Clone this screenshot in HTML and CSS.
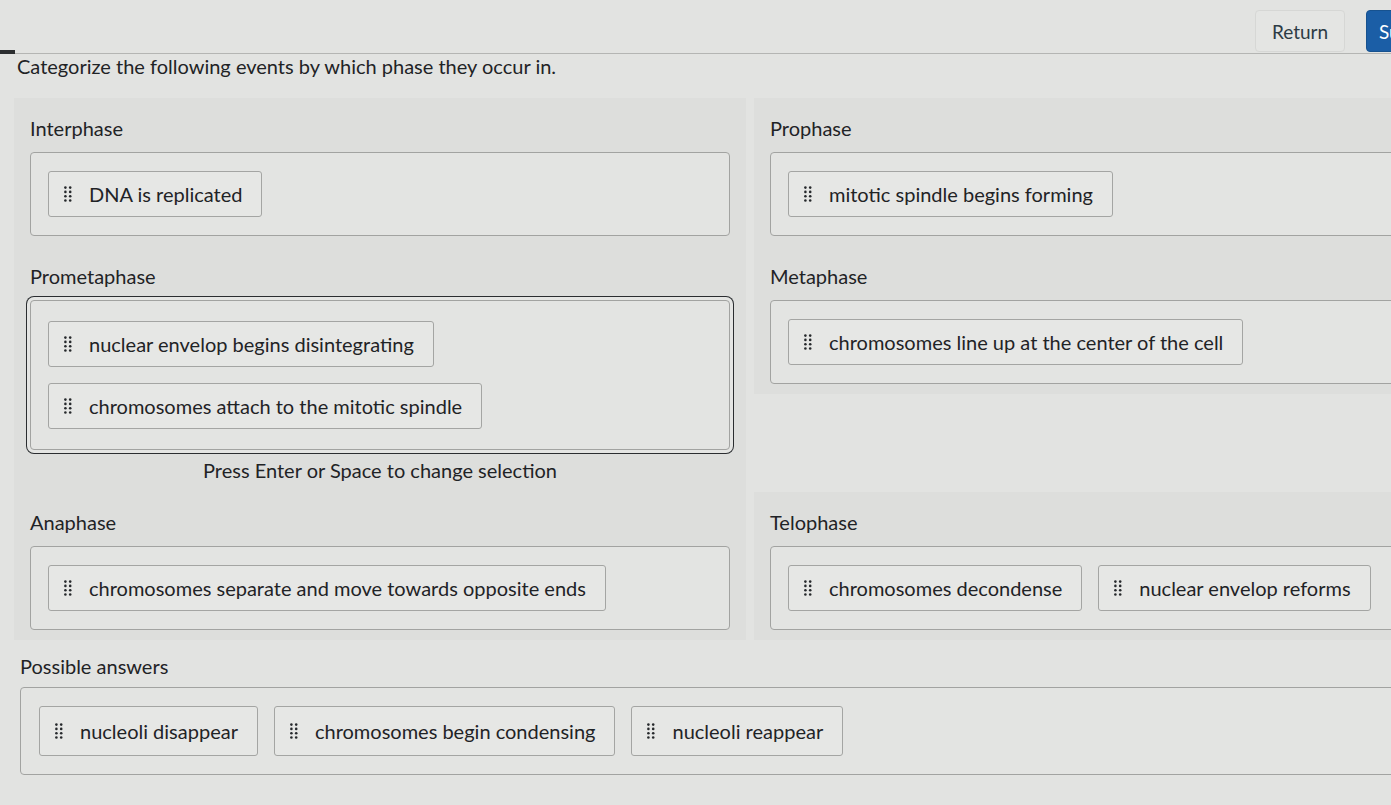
FILE: index.html
```html
<!DOCTYPE html>
<html lang="en">
<head>
<meta charset="utf-8">
<title>Categorize</title>
<link rel="stylesheet" href="styles.css">
</head>
<body>
<div class="page">
  <header class="header">
    <button class="btn btn-return">Return</button>
    <button class="btn btn-submit">Submit</button>
  </header>
  <div class="rule"><span class="rule-mark"></span><span class="rule-line"></span></div>

  <h1 class="title">Categorize the following events by which phase they occur in.</h1>

  <div class="grid">
    <section class="cat">
      <div class="cat-label">Interphase</div>
      <div class="zone">
        <div class="item"><svg class="grip" viewBox="0 0 8 16" width="8" height="16"><g fill="#26292c"><circle cx="1.4" cy="1.6" r="1.3"/><circle cx="6.2" cy="1.6" r="1.3"/><circle cx="1.4" cy="5.9" r="1.3"/><circle cx="6.2" cy="5.9" r="1.3"/><circle cx="1.4" cy="10.2" r="1.3"/><circle cx="6.2" cy="10.2" r="1.3"/><circle cx="1.4" cy="14.5" r="1.3"/><circle cx="6.2" cy="14.5" r="1.3"/></g></svg><span>DNA is replicated</span></div>
      </div>
    </section>
    <section class="cat">
      <div class="cat-label">Prophase</div>
      <div class="zone">
        <div class="item"><svg class="grip" viewBox="0 0 8 16" width="8" height="16"><g fill="#26292c"><circle cx="1.4" cy="1.6" r="1.3"/><circle cx="6.2" cy="1.6" r="1.3"/><circle cx="1.4" cy="5.9" r="1.3"/><circle cx="6.2" cy="5.9" r="1.3"/><circle cx="1.4" cy="10.2" r="1.3"/><circle cx="6.2" cy="10.2" r="1.3"/><circle cx="1.4" cy="14.5" r="1.3"/><circle cx="6.2" cy="14.5" r="1.3"/></g></svg><span>mitotic spindle begins forming</span></div>
      </div>
    </section>

    <section class="cat">
      <div class="cat-label">Prometaphase</div>
      <div class="zone zone-focus">
        <div class="item"><svg class="grip" viewBox="0 0 8 16" width="8" height="16"><g fill="#26292c"><circle cx="1.4" cy="1.6" r="1.3"/><circle cx="6.2" cy="1.6" r="1.3"/><circle cx="1.4" cy="5.9" r="1.3"/><circle cx="6.2" cy="5.9" r="1.3"/><circle cx="1.4" cy="10.2" r="1.3"/><circle cx="6.2" cy="10.2" r="1.3"/><circle cx="1.4" cy="14.5" r="1.3"/><circle cx="6.2" cy="14.5" r="1.3"/></g></svg><span>nuclear envelop begins disintegrating</span></div>
        <div class="item"><svg class="grip" viewBox="0 0 8 16" width="8" height="16"><g fill="#26292c"><circle cx="1.4" cy="1.6" r="1.3"/><circle cx="6.2" cy="1.6" r="1.3"/><circle cx="1.4" cy="5.9" r="1.3"/><circle cx="6.2" cy="5.9" r="1.3"/><circle cx="1.4" cy="10.2" r="1.3"/><circle cx="6.2" cy="10.2" r="1.3"/><circle cx="1.4" cy="14.5" r="1.3"/><circle cx="6.2" cy="14.5" r="1.3"/></g></svg><span>chromosomes attach to the mitotic spindle</span></div>
      </div>
      <p class="hint">Press Enter or Space to change selection</p>
    </section>
    <section class="cat">
      <div class="cat-label">Metaphase</div>
      <div class="zone">
        <div class="item"><svg class="grip" viewBox="0 0 8 16" width="8" height="16"><g fill="#26292c"><circle cx="1.4" cy="1.6" r="1.3"/><circle cx="6.2" cy="1.6" r="1.3"/><circle cx="1.4" cy="5.9" r="1.3"/><circle cx="6.2" cy="5.9" r="1.3"/><circle cx="1.4" cy="10.2" r="1.3"/><circle cx="6.2" cy="10.2" r="1.3"/><circle cx="1.4" cy="14.5" r="1.3"/><circle cx="6.2" cy="14.5" r="1.3"/></g></svg><span>chromosomes line up at the center of the cell</span></div>
      </div>
    </section>

    <section class="cat">
      <div class="cat-label">Anaphase</div>
      <div class="zone">
        <div class="item"><svg class="grip" viewBox="0 0 8 16" width="8" height="16"><g fill="#26292c"><circle cx="1.4" cy="1.6" r="1.3"/><circle cx="6.2" cy="1.6" r="1.3"/><circle cx="1.4" cy="5.9" r="1.3"/><circle cx="6.2" cy="5.9" r="1.3"/><circle cx="1.4" cy="10.2" r="1.3"/><circle cx="6.2" cy="10.2" r="1.3"/><circle cx="1.4" cy="14.5" r="1.3"/><circle cx="6.2" cy="14.5" r="1.3"/></g></svg><span>chromosomes separate and move towards opposite ends</span></div>
      </div>
    </section>
    <section class="cat">
      <div class="cat-label">Telophase</div>
      <div class="zone">
        <div class="item"><svg class="grip" viewBox="0 0 8 16" width="8" height="16"><g fill="#26292c"><circle cx="1.4" cy="1.6" r="1.3"/><circle cx="6.2" cy="1.6" r="1.3"/><circle cx="1.4" cy="5.9" r="1.3"/><circle cx="6.2" cy="5.9" r="1.3"/><circle cx="1.4" cy="10.2" r="1.3"/><circle cx="6.2" cy="10.2" r="1.3"/><circle cx="1.4" cy="14.5" r="1.3"/><circle cx="6.2" cy="14.5" r="1.3"/></g></svg><span>chromosomes decondense</span></div>
        <div class="item"><svg class="grip" viewBox="0 0 8 16" width="8" height="16"><g fill="#26292c"><circle cx="1.4" cy="1.6" r="1.3"/><circle cx="6.2" cy="1.6" r="1.3"/><circle cx="1.4" cy="5.9" r="1.3"/><circle cx="6.2" cy="5.9" r="1.3"/><circle cx="1.4" cy="10.2" r="1.3"/><circle cx="6.2" cy="10.2" r="1.3"/><circle cx="1.4" cy="14.5" r="1.3"/><circle cx="6.2" cy="14.5" r="1.3"/></g></svg><span>nuclear envelop reforms</span></div>
      </div>
    </section>
  </div>

  <section class="answers">
    <div class="cat-label">Possible answers</div>
    <div class="zone zone-answers">
      <div class="item item-tall"><svg class="grip" viewBox="0 0 8 16" width="8" height="16"><g fill="#26292c"><circle cx="1.4" cy="1.6" r="1.3"/><circle cx="6.2" cy="1.6" r="1.3"/><circle cx="1.4" cy="5.9" r="1.3"/><circle cx="6.2" cy="5.9" r="1.3"/><circle cx="1.4" cy="10.2" r="1.3"/><circle cx="6.2" cy="10.2" r="1.3"/><circle cx="1.4" cy="14.5" r="1.3"/><circle cx="6.2" cy="14.5" r="1.3"/></g></svg><span>nucleoli disappear</span></div>
      <div class="item item-tall"><svg class="grip" viewBox="0 0 8 16" width="8" height="16"><g fill="#26292c"><circle cx="1.4" cy="1.6" r="1.3"/><circle cx="6.2" cy="1.6" r="1.3"/><circle cx="1.4" cy="5.9" r="1.3"/><circle cx="6.2" cy="5.9" r="1.3"/><circle cx="1.4" cy="10.2" r="1.3"/><circle cx="6.2" cy="10.2" r="1.3"/><circle cx="1.4" cy="14.5" r="1.3"/><circle cx="6.2" cy="14.5" r="1.3"/></g></svg><span>chromosomes begin condensing</span></div>
      <div class="item item-tall"><svg class="grip" viewBox="0 0 8 16" width="8" height="16"><g fill="#26292c"><circle cx="1.4" cy="1.6" r="1.3"/><circle cx="6.2" cy="1.6" r="1.3"/><circle cx="1.4" cy="5.9" r="1.3"/><circle cx="6.2" cy="5.9" r="1.3"/><circle cx="1.4" cy="10.2" r="1.3"/><circle cx="6.2" cy="10.2" r="1.3"/><circle cx="1.4" cy="14.5" r="1.3"/><circle cx="6.2" cy="14.5" r="1.3"/></g></svg><span>nucleoli reappear</span></div>
    </div>
  </section>
</div>
</body>
</html>
```

FILE: styles.css
```css
html, body {
  margin: 0;
  padding: 0;
  overflow: hidden;
  background: #e2e3e1;
}

body {
  font-family: Lato, "Open Sans", "Liberation Sans", sans-serif;
  color: #1f2326;
  font-size: 20px;
}

.page {
  width: 1480px;
}

.header {
  height: 50px;
  display: flex;
  justify-content: flex-end;
  align-items: flex-start;
  padding-right: 24px;
  gap: 21px;
  box-sizing: border-box;
}

.btn {
  font-family: Lato, "Open Sans", "Liberation Sans", sans-serif;
  font-size: 19px;
  height: 42px;
  margin-top: 10px;
  border-radius: 4px;
  cursor: pointer;
}

.btn-return {
  width: 90px;
  background: #e4e5e3;
  border: 1px solid #d6d7d5;
  color: #2d3b45;
}

.btn-submit {
  width: 90px;
  background: #1b5ea6;
  border: 1px solid #17528f;
  color: #ffffff;
  text-align: left;
  padding-left: 12px;
}

.rule {
  display: flex;
  align-items: flex-end;
  height: 4px;
}

.rule-mark {
  width: 15px;
  height: 4px;
  background: #2c2e30;
}

.rule-line {
  flex: 1;
  height: 1px;
  background: #b4b5b3;
}

.title {
  margin: 0 0 0 17px;
  font-size: 20px;
  font-weight: 400;
  line-height: 24px;
}

.grid {
  margin: 20px 14px 0 14px;
  display: grid;
  grid-template-columns: 732px 1fr;
  column-gap: 8px;
  align-items: start;
}

.cat {
  background: #dddedc;
  padding: 18px 16px 10px 16px;
}

.cat-label {
  line-height: 24px;
  margin-bottom: 12px;
}

.zone {
  border: 1px solid #a2a3a1;
  border-radius: 4px;
  background: #e3e4e2;
  padding: 18px 17px;
  display: flex;
  flex-wrap: wrap;
  gap: 16px;
}

.zone-focus {
  flex-direction: column;
  align-items: flex-start;
  padding: 20px 17px;
  box-shadow: 0 0 0 3px #e4e5e3, 0 0 0 4px #2a2d30;
}

.item {
  height: 46px;
  box-sizing: border-box;
  display: flex;
  align-items: center;
  gap: 17px;
  padding: 0 19px 0 15px;
  border: 1px solid #a4a5a3;
  border-radius: 3px;
  background: #e6e7e5;
  white-space: nowrap;
}

.item-tall {
  height: 50px;
}

.grip {
  flex: none;
}

.hint {
  margin: 8px 0 0 0;
  text-align: center;
  line-height: 24px;
}

.answers {
  margin: 14px 0 0 20px;
}

.answers .cat-label {
  margin-bottom: 9px;
}

.zone-answers {
  padding: 18px 18px;
}
```
